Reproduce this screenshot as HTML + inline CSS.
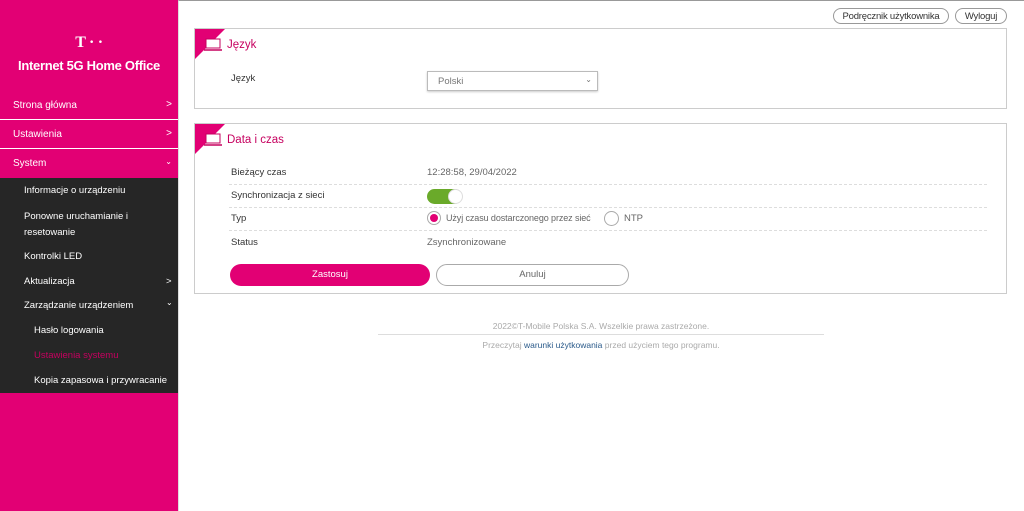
<!DOCTYPE html>
<html><head><meta charset="utf-8"><style>
*{box-sizing:border-box;margin:0;padding:0}
body{width:1024px;height:511px;overflow:hidden;background:#fff;font-family:"Liberation Sans",sans-serif;position:relative;font-size:10px;color:#333}
.sb{position:absolute;left:0;top:0;width:178px;height:511px;background:#e20074}
.logo{position:absolute;top:34px;left:0;width:178px;text-align:center;color:#fff;font-weight:bold;font-size:13px;letter-spacing:-0.3px}
.logo .t{font-size:16px;margin-bottom:6px;font-family:"Liberation Serif",serif}
.m{position:absolute;left:0;width:178px;height:28px;color:#fff;font-size:10px;padding:8px 0 0 13px;border-bottom:1px solid #fff}
.m .a{position:absolute;right:6px;top:7px;font-size:10px}
.dk{position:absolute;left:0;top:178px;width:178px;height:215px;background:#262626}
.s{position:absolute;color:#fff;font-size:9.5px}
.main{position:absolute;left:178px;top:0;right:0;height:511px;border-top:1px solid #999;border-left:1px solid #ddd}
.btn{position:absolute;top:8px;height:16px;border:1px solid #999;border-radius:9px;font-size:9.5px;color:#333;text-align:center;line-height:15px;letter-spacing:-0.2px}
.card{position:absolute;left:194px;width:813px;border:1px solid #ccc;background:#fff}
.tri{position:absolute;left:0;top:0;width:0;height:0;border-top:30px solid #e20074;border-right:30px solid transparent}
.ttl{position:absolute;left:32px;top:10px;color:#c6005f;font-size:11.5px}
.ic{position:absolute;left:8px;top:8px;width:20px;height:16px}
.lbl{position:absolute;left:36px;font-size:9.5px;color:#333}
.val{position:absolute;left:232px;font-size:9.5px;color:#666}
.ln{position:absolute;left:34px;width:758px;border-top:1px dashed #ddd}
</style></head><body>
<div class="sb">
<div class="logo"><div class="t">T · ·</div>Internet 5G Home Office</div>
<div class="m" style="top:92px">Strona główna<span class="a">&gt;</span></div>
<div class="m" style="top:121px">Ustawienia<span class="a">&gt;</span></div>
<div class="m" style="top:150px;border:none">System<span class="a" style="font-size:8px">⌄</span></div>
<div class="dk">
<div class="s" style="left:24px;top:7px">Informacje o urządzeniu</div>
<div class="s" style="left:24px;top:31px;line-height:16px">Ponowne uruchamianie i<br>resetowanie</div>
<div class="s" style="left:24px;top:73px">Kontrolki LED</div>
<div class="s" style="left:24px;top:98px">Aktualizacja</div><div class="s" style="left:166px;top:98px">&gt;</div>
<div class="s" style="left:24px;top:122px">Zarządzanie urządzeniem</div><div class="s" style="left:166px;top:120px;font-size:8px">⌄</div>
<div class="s" style="left:34px;top:147px">Hasło logowania</div>
<div class="s" style="left:34px;top:172px;color:#c6005f">Ustawienia systemu</div>
<div class="s" style="left:34px;top:197px">Kopia zapasowa i przywracanie</div>
</div>
</div>
<div class="main"></div>
<div class="btn" style="left:833px;width:116px">Podręcznik użytkownika</div>
<div class="btn" style="left:955px;width:52px">Wyloguj</div>

<div class="card" style="top:28px;height:81px">
<div class="tri"></div>
<svg class="ic" viewBox="0 0 20 16"><rect x="3" y="2" width="14" height="9" fill="#fff" stroke="#c6005f"/><path d="M1 13h18" stroke="#c6005f" stroke-width="1.5"/></svg>
<div class="ttl">Język</div>
<div class="lbl" style="top:44px">Język</div>
<div style="position:absolute;left:232px;top:42px;width:171px;height:20px;border:1px solid #bbb;box-shadow:0 1px 2px #ccc;font-size:9.5px;color:#777;padding:4px 0 0 10px">Polski<span style="position:absolute;right:5px;top:3px;font-size:8px">⌄</span></div>
</div>

<div class="card" style="top:123px;height:171px">
<div class="tri"></div>
<svg class="ic" viewBox="0 0 20 16"><rect x="3" y="2" width="14" height="9" fill="#fff" stroke="#c6005f"/><path d="M1 13h18" stroke="#c6005f" stroke-width="1.5"/></svg>
<div class="ttl">Data i czas</div>
<div class="lbl" style="top:43px">Bieżący czas</div><div class="val" style="top:43px">12:28:58, 29/04/2022</div>
<div class="ln" style="top:60px"></div>
<div class="lbl" style="top:66px">Synchronizacja z sieci</div>
<div style="position:absolute;left:232px;top:65px;width:35px;height:15px;border-radius:8px;background:#6aaa2a"></div>
<div style="position:absolute;left:253px;top:65px;width:15px;height:15px;border-radius:50%;background:#fff;border:1px solid #ddd"></div>
<div class="ln" style="top:83px"></div>
<div class="lbl" style="top:89px">Typ</div>
<div style="position:absolute;left:232px;top:87px;width:14px;height:14px;border-radius:50%;border:1px solid #aaa;background:#fff"><div style="margin:2px;width:8px;height:8px;border-radius:50%;background:#e20074"></div></div>
<div class="val" style="top:89px;left:251px;font-size:9px;letter-spacing:-0.1px">Użyj czasu dostarczonego przez sieć</div>
<div style="position:absolute;left:409px;top:87px;width:15px;height:15px;border-radius:50%;border:1px solid #aaa"></div>
<div class="val" style="top:89px;left:429px">NTP</div>
<div class="ln" style="top:106px"></div>
<div class="lbl" style="top:113px">Status</div><div class="val" style="top:113px">Zsynchronizowane</div>
<div style="position:absolute;left:35px;top:140px;width:200px;height:22px;border-radius:11px;background:#e20074;color:#fff;text-align:center;line-height:22px;font-size:9.5px">Zastosuj</div>
<div style="position:absolute;left:241px;top:140px;width:193px;height:22px;border-radius:11px;border:1px solid #aaa;color:#666;text-align:center;line-height:20px;font-size:9.5px">Anuluj</div>
</div>

<div style="position:absolute;left:178px;width:846px;top:321px;text-align:center;font-size:8.5px;color:#aaa">2022©T-Mobile Polska S.A. Wszelkie prawa zastrzeżone.</div>
<div style="position:absolute;left:378px;width:446px;top:334px;border-top:1px solid #ddd"></div>
<div style="position:absolute;left:178px;width:846px;top:340px;text-align:center;font-size:8.5px;color:#aaa">Przeczytaj <span style="color:#2a5a8a">warunki użytkowania</span> przed użyciem tego programu.</div>
</body></html>
